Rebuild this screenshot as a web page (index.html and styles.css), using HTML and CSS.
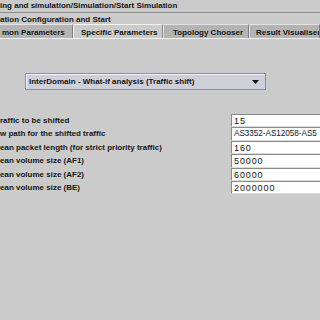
FILE: index.html
```html
<!DOCTYPE html>
<html>
<head>
<meta charset="utf-8">
<link rel="stylesheet" href="styles.css">
</head>
<body>
<div class="window">
  <div class="titlebar">ing and simulation/Simulation/Start Simulation</div>
  <div class="section-title">ation Configuration and Start</div>
  <div class="tabs">
    <div class="tab tab-common">mon Parameters</div>
    <div class="tab tab-specific selected">Specific Parameters</div>
    <div class="tab tab-topology">Topology Chooser</div>
    <div class="tab tab-result">Result Visualiser</div>
  </div>
  <div class="panel">
    <div class="combo">
      <span class="combo-text">InterDomain - What-if analysis (Traffic shift)</span>
      <svg class="combo-arrow" width="7" height="4" viewBox="0 0 7 4"><path d="M0 0H7L3.5 4Z" fill="#111"/></svg>
    </div>
    <div class="form">
      <div class="label">raffic to be shifted</div>
      <div class="field spaced">15</div>
      <div class="label">w path for the shifted traffic</div>
      <div class="field path">AS3352-AS12058-AS5</div>
      <div class="label">ean packet length (for strict priority traffic)</div>
      <div class="field spaced">160</div>
      <div class="label">ean volume size (AF1)</div>
      <div class="field spaced">50000</div>
      <div class="label">ean volume size (AF2)</div>
      <div class="field spaced">60000</div>
      <div class="label">ean volume size (BE)</div>
      <div class="field spaced">2000000</div>
    </div>
  </div>
</div>
</body>
</html>
```

FILE: styles.css
```css
html, body {
  margin: 0;
  padding: 0;
  background: #cbcbcb;
  width: 320px;
  height: 320px;
  overflow: hidden;
}

.window {
  font-family: "Liberation Sans", Arial, sans-serif;
  font-size: 8px;
  font-weight: bold;
  color: #151515;
  width: 320px;
  height: 320px;
  overflow: hidden;
}

.titlebar {
  height: 12px;
  line-height: 12px;
  border-bottom: 1px solid #8c8c8c;
  white-space: nowrap;
}

.section-title {
  height: 11px;
  line-height: 13px;
  white-space: nowrap;
}

.tabs {
  display: flex;
  height: 14px;
  white-space: nowrap;
}

.tab {
  box-sizing: border-box;
  height: 14px;
  line-height: 16px;
  background: #b4b4b4;
  border-top: 1px solid #e2e2e2;
  border-left: 1px solid #e2e2e2;
  border-right: 1px solid #7e7e7e;
  flex: none;
  overflow: hidden;
}

.tab-common {
  width: 73px;
  padding-left: 2px;
  border-left: none;
}

.tab-specific {
  width: 90px;
  padding-left: 7px;
}

.tab-topology {
  width: 86px;
  padding-left: 9px;
}

.tab-result {
  width: 71px;
  padding-left: 6px;
}

.tab.selected {
  background: #cbcbcb;
  border-top: 1px solid #f4f4f4;
  border-left: 1px solid #f4f4f4;
  border-right: 1px solid #8a8a8a;
}

.panel {
  border-top: 1px solid #f0f0f0;
}

.combo {
  box-sizing: border-box;
  margin: 34px 0 0 25px;
  width: 241px;
  height: 17px;
  display: flex;
  align-items: center;
  justify-content: space-between;
  padding: 0 6px 0 3px;
  background: #cfcfd8;
  border: 1px solid #8e8ea2;
  box-shadow: inset 1px 1px 0 #f2f2f8;
}

.combo-text {
  white-space: nowrap;
  line-height: 15px;
}

.combo-arrow {
  display: block;
}

.form {
  display: grid;
  grid-template-columns: 231px 89px;
  grid-auto-rows: 13.4px;
  margin-top: 24px;
}

.label {
  white-space: nowrap;
  line-height: 13px;
  overflow: hidden;
}

.field {
  box-sizing: border-box;
  background: #ffffff;
  border-top: 1px solid #8a8a8a;
  border-left: 1px solid #8a8a8a;
  border-bottom: 1px solid #dcdcdc;
  font-weight: normal;
  font-size: 9px;
  line-height: 12px;
  padding-left: 2px;
  white-space: nowrap;
  overflow: hidden;
}

.spaced {
  letter-spacing: 0.9px;
}

.path {
  font-size: 8.2px;
  letter-spacing: -0.05px;
}
```
